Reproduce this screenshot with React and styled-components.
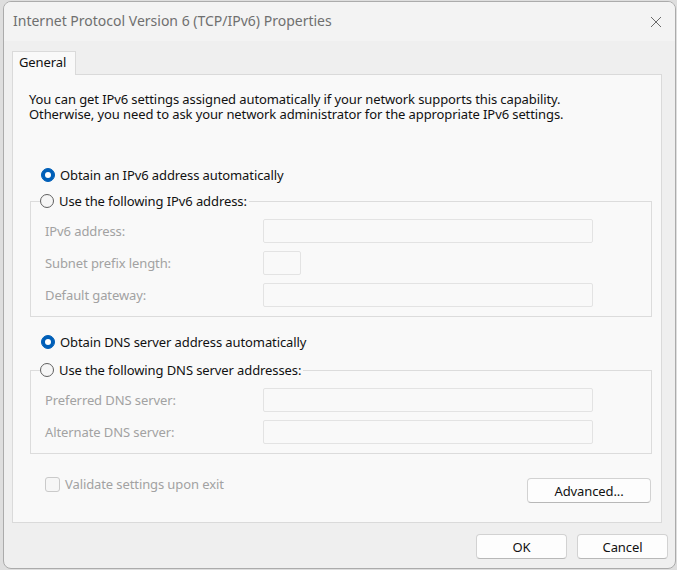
import React from 'react';
import styled, { createGlobalStyle } from 'styled-components';

const GlobalStyle = createGlobalStyle`
  html, body {
    margin: 0;
    padding: 0;
    background: #dedede;
  }
  body {
    font-family: "Segoe UI", "Noto Sans", sans-serif;
    font-size: 13px;
    letter-spacing: -0.1px;
    color: #1a1a1a;
  }
`;

const Screen = styled.div`
  width: 677px;
  height: 570px;
  padding: 1px 0 0 3px;
  box-sizing: border-box;
`;

const Window = styled.div`
  width: 673px;
  height: 568px;
  box-sizing: border-box;
  border: 1px solid #ababab;
  border-radius: 8px;
  background: #efefef;
  display: flex;
  flex-direction: column;
  overflow: hidden;
`;

const TitleBar = styled.div`
  height: 39px;
  flex-shrink: 0;
  display: flex;
  align-items: center;
  justify-content: space-between;
  padding: 0 13px 0 9px;
  background: #f3f3f3;
`;

const Title = styled.div`
  font-size: 14px;
  color: #6f6f6f;
  letter-spacing: 0;
  margin-top: -2px;
`;

const Body = styled.div`
  flex: 1;
  display: flex;
  flex-direction: column;
  padding: 10px 7px 0 8px;
`;

const TabStrip = styled.div`
  display: flex;
  height: 24px;
  margin-bottom: -1px;
  position: relative;
  z-index: 1;
`;

const Tab = styled.div`
  width: 64px;
  box-sizing: border-box;
  padding: 1px 0 0 6px;
  background: #f9f9f9;
  border: 1px solid #dadada;
  border-bottom: none;
  color: #111;
`;

const Panel = styled.div`
  height: 449px;
  box-sizing: border-box;
  margin-right: 6px;
  background: #f9f9f9;
  border: 1px solid #dadada;
  padding: 17px 8px 0 16px;
  display: flex;
  flex-direction: column;
`;

const Intro = styled.p`
  margin: 0;
  line-height: 15px;
  white-space: nowrap;
  color: #111;
`;

const RadioRow = styled.label`
  display: flex;
  align-items: center;
  gap: 5px;
  height: 20px;
  padding-left: 12px;
  margin-top: ${p => p.$top || 0}px;
  color: #111;
  white-space: nowrap;
`;

const Radio = styled.span`
  width: 14px;
  height: 14px;
  box-sizing: border-box;
  border-radius: 50%;
  flex-shrink: 0;
  display: flex;
  align-items: center;
  justify-content: center;
  background: ${p => (p.$checked ? '#005fb8' : '#f6f6f6')};
  border: 1px solid ${p => (p.$checked ? '#005fb8' : '#606060')};

  &::after {
    content: '';
    display: ${p => (p.$checked ? 'block' : 'none')};
    width: 6px;
    height: 6px;
    border-radius: 50%;
    background: #fff;
  }
`;

const Group = styled.fieldset`
  margin: ${p => p.$top || 0}px 0 0 1px;
  padding: 0 0 9px 14px;
  width: 622px;
  box-sizing: border-box;
  min-width: 0;
  border: 1px solid #dcdcdc;

  legend {
    padding: 0;
    margin-left: -5px;
  }
  legend ${RadioRow} {
    padding-left: 0;
    padding-right: 2px;
  }
`;

const Fields = styled.div`
  display: flex;
  flex-direction: column;
  gap: ${p => p.$gap}px;
  padding-top: 8px;
`;

const FieldRow = styled.div`
  display: grid;
  grid-template-columns: 218px auto;
  align-items: center;
  height: 24px;
`;

const FieldLabel = styled.span`
  color: #a2a2a2;
`;

const TextBox = styled.div`
  width: ${p => p.$w || 330}px;
  height: 24px;
  box-sizing: border-box;
  border: 1px solid #e3e3e3;
  border-radius: 2px;
  background: #f9f9f9;
`;

const BottomRow = styled.div`
  display: flex;
  justify-content: space-between;
  align-items: flex-start;
  margin-top: 20px;
  padding-right: 2px;
`;

const CheckRow = styled.label`
  display: flex;
  align-items: center;
  gap: 5px;
  height: 20px;
  padding-left: 16px;
  color: #a2a2a2;
`;

const CheckBox = styled.span`
  width: 15px;
  height: 15px;
  box-sizing: border-box;
  border: 1px solid #cacaca;
  border-radius: 3px;
  background: #f6f6f6;
`;

const Button = styled.button`
  width: ${p => p.$w || 91}px;
  height: 25px;
  margin-top: ${p => p.$top || 0}px;
  box-sizing: border-box;
  border: 1px solid #d2d2d2;
  border-bottom-color: #b8b8b8;
  border-radius: 4px;
  background: #fdfdfd;
  font-family: inherit;
  font-size: 13px;
  letter-spacing: -0.1px;
  color: #111;
  padding: 0;
`;

const Footer = styled.div`
  display: flex;
  justify-content: flex-end;
  gap: 10px;
  padding-top: 11px;
`;

const CloseIcon = () => (
  <svg width="12" height="12" viewBox="0 0 12 12">
    <path d="M1 1 L11 11 M11 1 L1 11" stroke="#6a6a6a" strokeWidth="1" fill="none" />
  </svg>
);

const fields1 = [
  { label: 'IPv6 address:', w: 330 },
  { label: 'Subnet prefix length:', w: 38 },
  { label: 'Default gateway:', w: 330 },
];

const fields2 = [
  { label: 'Preferred DNS server:', w: 330 },
  { label: 'Alternate DNS server:', w: 330 },
];

export default function App() {
  return (
    <Screen>
      <GlobalStyle />
      <Window>
        <TitleBar>
          <Title>Internet Protocol Version 6 (TCP/IPv6) Properties</Title>
          <CloseIcon />
        </TitleBar>
        <Body>
          <TabStrip>
            <Tab>General</Tab>
          </TabStrip>
          <Panel>
            <Intro>
              You can get IPv6 settings assigned automatically if your network supports this capability.
              <br />
              Otherwise, you need to ask your network administrator for the appropriate IPv6 settings.
            </Intro>

            <RadioRow $top={43}>
              <Radio $checked />
              Obtain an IPv6 address automatically
            </RadioRow>
            <Group $top={6}>
              <legend>
                <RadioRow>
                  <Radio />
                  Use the following IPv6 address:
                </RadioRow>
              </legend>
              <Fields $gap={8}>
                {fields1.map(f => (
                  <FieldRow key={f.label}>
                    <FieldLabel>{f.label}</FieldLabel>
                    <TextBox $w={f.w} />
                  </FieldRow>
                ))}
              </Fields>
            </Group>

            <RadioRow $top={15}>
              <Radio $checked />
              Obtain DNS server address automatically
            </RadioRow>
            <Group $top={8}>
              <legend>
                <RadioRow>
                  <Radio />
                  Use the following DNS server addresses:
                </RadioRow>
              </legend>
              <Fields $gap={8}>
                {fields2.map(f => (
                  <FieldRow key={f.label}>
                    <FieldLabel>{f.label}</FieldLabel>
                    <TextBox $w={f.w} />
                  </FieldRow>
                ))}
              </Fields>
            </Group>

            <BottomRow>
              <CheckRow>
                <CheckBox />
                Validate settings upon exit
              </CheckRow>
              <Button $w={124} $top={4}>Advanced...</Button>
            </BottomRow>
          </Panel>
          <Footer>
            <Button>OK</Button>
            <Button>Cancel</Button>
          </Footer>
        </Body>
      </Window>
    </Screen>
  );
}
